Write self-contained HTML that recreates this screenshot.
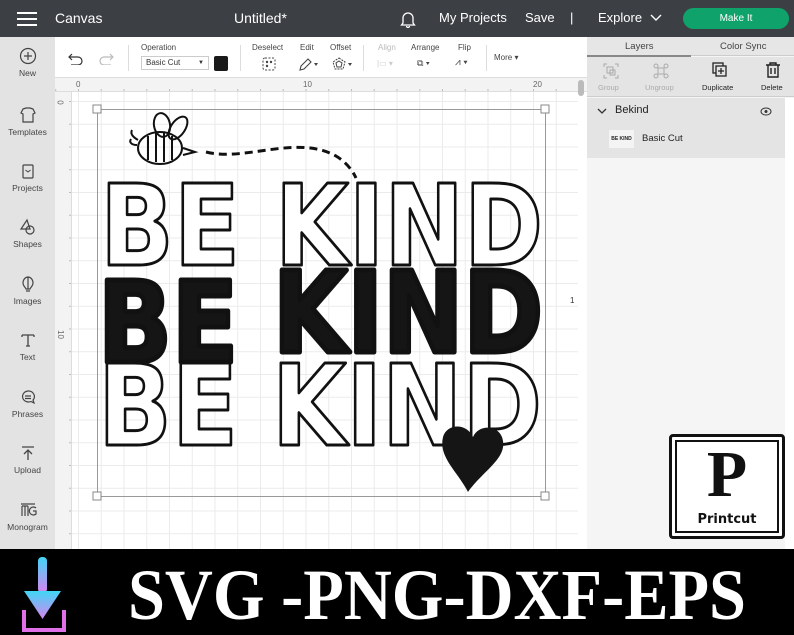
<!DOCTYPE html>
<html><head><meta charset="utf-8"><style>
*{margin:0;padding:0;box-sizing:border-box}
body{width:794px;height:635px;overflow:hidden;position:relative;font-family:"Liberation Sans",sans-serif;background:#fff}
.abs{position:absolute}
.hdr{left:0;top:0;width:794px;height:37px;background:#3c3f44;color:#fff}
.side{left:0;top:37px;width:55px;height:512px;background:#e3e3e3}
.si{position:absolute;left:0;width:55px;text-align:center;font-size:8.5px;color:#444}
.si svg{display:block;margin:0 auto 3px}
.tb{left:55px;top:37px;width:532px;height:41px;background:#fff;border-bottom:1px solid #ddd}
.lbl{position:absolute;font-size:8px;color:#444}
.ruler{background:#f3f3f3}
.grid{left:72px;top:92px;width:506px;height:457px;background-color:#fff;
background-image:linear-gradient(#ebebeb 1px,transparent 1px),linear-gradient(90deg,#ebebeb 1px,transparent 1px);
background-size:22.75px 22.75px;background-position:6px 9px}
.rp{left:587px;top:37px;width:207px;height:512px;background:#f5f5f5}
</style></head><body>
<div class="abs hdr">
  <div class="abs" style="left:17px;top:12px;width:20px;height:2px;background:#fff;box-shadow:0 6px 0 #fff,0 12px 0 #fff"></div>
  <div class="abs" style="left:55px;top:10px;font-size:14px">Canvas</div>
  <div class="abs" style="left:234px;top:10px;font-size:14px">Untitled*</div>
  <svg class="abs" style="left:400px;top:10px" width="16" height="18" viewBox="0 0 16 18"><path d="M3 13V8a5 5 0 0 1 10 0v5l1.5 2h-13z M6.5 16a1.5 1.5 0 0 0 3 0" fill="none" stroke="#fff" stroke-width="1.3"/></svg>
  <div class="abs" style="left:439px;top:10px;font-size:13px">My Projects</div>
  <div class="abs" style="left:525px;top:10px;font-size:13px">Save</div>
  <div class="abs" style="left:570px;top:10px;font-size:13px">|</div>
  <div class="abs" style="left:598px;top:10px;font-size:13px">Explore</div>
  <svg class="abs" style="left:650px;top:14px" width="12" height="8"><path d="M1 1l5 5 5-5" fill="none" stroke="#fff" stroke-width="1.4"/></svg>
  <div class="abs" style="left:683px;top:8px;width:106px;height:21px;background:#0fa36b;border-radius:11px;font-size:10px;text-align:center;line-height:21px">Make It</div>
</div>
<div class="abs side">
  <div class="si" style="top:10px"><svg width="18" height="18"><circle cx="9" cy="9" r="7.5" fill="none" stroke="#444" stroke-width="1.2"/><path d="M9 5v8M5 9h8" stroke="#444" stroke-width="1.2"/></svg>New</div>
  <div class="si" style="top:69px"><svg width="18" height="18"><path d="M4 3l3-1h4l3 1 2 4-2 1v8H4V8L2 7z" fill="none" stroke="#444" stroke-width="1.2"/></svg>Templates</div>
  <div class="si" style="top:125px"><svg width="18" height="18"><rect x="4" y="3" width="10" height="13" rx="1" fill="none" stroke="#444" stroke-width="1.2"/><path d="M6.5 8l2.5 2 2.5-2" fill="none" stroke="#444"/></svg>Projects</div>
  <div class="si" style="top:181px"><svg width="18" height="18"><path d="M8 2l-6 9h9z" fill="none" stroke="#444" stroke-width="1.2"/><circle cx="11" cy="12" r="4" fill="none" stroke="#444" stroke-width="1.2"/></svg>Shapes</div>
  <div class="si" style="top:238px"><svg width="18" height="18"><path d="M9 2a5 6 0 0 0-5 6c0 3 3 5 3 6h4c0-1 3-3 3-6a5 6 0 0 0-5-6zM7 16h4M9 2v12" fill="none" stroke="#444" stroke-width="1.2"/></svg>Images</div>
  <div class="si" style="top:294px"><svg width="18" height="18"><path d="M3 4h12M9 4v11M7 15h4M3 4v2M15 4v2" fill="none" stroke="#444" stroke-width="1.3"/></svg>Text</div>
  <div class="si" style="top:351px"><svg width="18" height="18"><path d="M9 3a6 5.5 0 1 0 3 10.5l3 1.5-1-3A6 5.5 0 0 0 9 3zM6 8h6M6 10.5h6" fill="none" stroke="#444" stroke-width="1.2"/></svg>Phrases</div>
  <div class="si" style="top:407px"><svg width="18" height="18"><path d="M3 3h12M9 16V6M5 10l4-4 4 4" fill="none" stroke="#444" stroke-width="1.3"/></svg>Upload</div>
  <div class="si" style="top:464px"><svg width="18" height="18"><path d="M2 3h14M3 5v10M6 5v10M9 5v10M3 5h6M17 7a4 4 0 1 0 0 6v-3h-3" fill="none" stroke="#444" stroke-width="1.2"/></svg>Monogram</div>
</div>
<div class="abs tb">
  <svg class="abs" style="left:13px;top:16px" width="16" height="12"><path d="M4 1L1 4l3 3M1 4h9a4 4 0 0 1 0 8H3" fill="none" stroke="#333" stroke-width="1.2"/></svg>
  <svg class="abs" style="left:43px;top:16px" width="16" height="12"><path d="M12 1l3 3-3 3M15 4H6a4 4 0 0 0 0 8h7" fill="none" stroke="#bbb" stroke-width="1.2"/></svg>
  <div class="abs" style="left:73px;top:8px;width:1px;height:26px;background:#ddd"></div>
  <div class="lbl" style="left:86px;top:6px">Operation</div>
  <div class="abs" style="left:86px;top:19px;width:68px;height:14px;border:1px solid #ccc;font-size:8px;line-height:12px;padding-left:4px;color:#333">Basic Cut<span style="position:absolute;right:4px;font-size:6px">▼</span></div>
  <div class="abs" style="left:159px;top:19px;width:14px;height:15px;background:#1a1a1a;border-radius:2px"></div>
  <div class="abs" style="left:185px;top:8px;width:1px;height:26px;background:#ddd"></div>
  <div class="lbl" style="left:197px;top:6px">Deselect</div>
  <svg class="abs" style="left:207px;top:20px" width="14" height="14"><rect x="1" y="1" width="12" height="12" rx="2" fill="none" stroke="#444" stroke-dasharray="2 1.5"/><circle cx="5" cy="5" r="1.2" fill="#444"/><circle cx="9" cy="5" r="1.2" fill="#444"/><circle cx="5" cy="9" r="1.2" fill="#444"/></svg>
  <div class="lbl" style="left:245px;top:6px">Edit</div>
  <svg class="abs" style="left:243px;top:20px" width="22" height="14"><path d="M2 13l1-4 7-7 3 3-7 7z" fill="none" stroke="#444" stroke-width="1.1"/><path d="M16 6l2 3 2-3z" fill="#444"/></svg>
  <div class="lbl" style="left:275px;top:6px">Offset</div>
  <svg class="abs" style="left:277px;top:20px" width="22" height="14"><path d="M7 1l6 4-2 7H3L1 5z" fill="none" stroke="#444" stroke-dasharray="2 1"/><path d="M7 4l3 2-1 4H5L4 6z" fill="none" stroke="#444"/><path d="M16 6l2 3 2-3z" fill="#444"/></svg>
  <div class="abs" style="left:308px;top:8px;width:1px;height:26px;background:#ddd"></div>
  <div class="lbl" style="left:323px;top:6px;color:#bbb">Align</div>
  <div class="lbl" style="left:322px;top:22px;color:#ccc">|▭ ▾</div>
  <div class="lbl" style="left:356px;top:6px">Arrange</div>
  <div class="lbl" style="left:362px;top:21px;font-size:9px">⧉ ▾</div>
  <div class="lbl" style="left:403px;top:6px">Flip</div>
  <div class="lbl" style="left:400px;top:20px;font-size:10px">⩘ ▾</div>
  <div class="abs" style="left:431px;top:8px;width:1px;height:26px;background:#ddd"></div>
  <div class="lbl" style="left:439px;top:16px">More ▾</div>
</div>
<div class="abs ruler" style="left:55px;top:78px;width:532px;height:14px;border-bottom:1px solid #ddd;background-image:linear-gradient(90deg,#bbb 1px,transparent 1px);background-size:22.75px 3px;background-repeat:repeat-x;background-position:23px 11px"></div>
<div class="abs ruler" style="left:55px;top:92px;width:17px;height:457px;border-right:1px solid #ddd;background-image:linear-gradient(#bbb 1px,transparent 1px);background-size:3px 22.75px;background-repeat:repeat-y;background-position:14px 9px"></div>
<div class="lbl" style="left:76px;top:80px;color:#666">0</div>
<div class="lbl" style="left:303px;top:80px;color:#666">10</div>
<div class="lbl" style="left:533px;top:80px;color:#666">20</div>
<div class="lbl" style="left:58px;top:98px;color:#666;transform:rotate(90deg)">0</div>
<div class="lbl" style="left:56px;top:330px;color:#666;transform:rotate(90deg)">10</div>
<div class="abs" style="left:578px;top:80px;width:6px;height:16px;background:#bbb;border-radius:3px"></div>
<div class="abs grid"></div>
<div class="lbl" style="left:570px;top:296px;color:#333">1</div>
<svg class="abs" style="left:90px;top:100px" width="470" height="410" viewBox="0 0 470 410">
  <rect x="7.5" y="9.5" width="448" height="387" fill="none" stroke="#999"/>
  <g fill="#fff" stroke="#888"><rect x="3" y="5" width="8" height="8"/><rect x="451" y="5" width="8" height="8"/><rect x="3" y="392" width="8" height="8"/><rect x="451" y="392" width="8" height="8"/></g>
  <g fill="none" stroke="#111" stroke-width="2">
    <ellipse cx="70" cy="48" rx="22" ry="16"/>
    <path d="M58 36v24M66 33v29M74 33v29M82 36v24"/>
    <ellipse cx="72" cy="25" rx="8" ry="12" transform="rotate(-10 72 25)"/>
    <ellipse cx="88" cy="28" rx="7" ry="13" transform="rotate(35 88 28)"/>
    <path d="M48 40c-5-3-8-6-6-10M47 45c-6 0-8-3-6-6"/>
    <path d="M93 48l12 4-12 3"/>
  </g>
  <path d="M116 52c40 10 90-18 130 4c10 6 17 15 20 22" fill="none" stroke="#111" stroke-width="3" stroke-dasharray="8 5"/>
  <g font-family="DejaVu Sans,sans-serif" font-weight="bold" font-size="112" stroke="#111" stroke-width="3" stroke-linejoin="round">
    <text x="10" y="165" fill="#fff" textLength="140" lengthAdjust="spacingAndGlyphs">BE</text>
    <text x="185" y="165" fill="#fff" textLength="268" lengthAdjust="spacingAndGlyphs">KIND</text>
    <text x="8" y="262" fill="#151515" stroke-width="5" textLength="140" lengthAdjust="spacingAndGlyphs">BE</text>
    <text x="183" y="252" fill="#151515" stroke-width="5" textLength="270" lengthAdjust="spacingAndGlyphs">KIND</text>
    <text x="8" y="345" fill="#fff" textLength="140" lengthAdjust="spacingAndGlyphs">BE</text>
    <text x="182" y="345" fill="#fff" textLength="270" lengthAdjust="spacingAndGlyphs">KIND</text>
  </g>
  <path d="M378 392c-10-20-30-35-25-55c4-14 24-14 30 0c6-14 28-12 30 4c3 18-20 30-35 51z" fill="#151515"/>
</svg>
<div class="abs rp">
  <div class="abs" style="left:0;top:0;width:207px;height:19px;background:#e6e6e6;border-bottom:1px solid #ccc"></div>
  <div class="abs" style="left:0;top:18px;width:104px;height:2px;background:#888"></div>
  <div class="abs" style="left:38px;top:4px;font-size:9.5px;color:#444">Layers</div>
  <div class="abs" style="left:133px;top:4px;font-size:9.5px;color:#444">Color Sync</div>
  <div class="abs" style="left:0;top:20px;width:207px;height:40px;background:#e4e4e4;border-bottom:1px solid #ccc"></div>
  <div class="abs" style="left:11px;top:46px;font-size:7.5px;color:#aaa">Group</div>
  <div class="abs" style="left:58px;top:46px;font-size:7.5px;color:#aaa">Ungroup</div>
  <div class="abs" style="left:115px;top:46px;font-size:7.5px;color:#222">Duplicate</div>
  <div class="abs" style="left:174px;top:46px;font-size:7.5px;color:#222">Delete</div>
  <svg class="abs" style="left:16px;top:26px" width="16" height="16"><path d="M1 4V1h3M12 1h3v3M15 12v3h-3M4 15H1v-3" fill="none" stroke="#aaa"/><rect x="4" y="4" width="6" height="6" fill="none" stroke="#aaa"/><rect x="7" y="7" width="5" height="5" fill="none" stroke="#aaa"/></svg>
  <svg class="abs" style="left:66px;top:26px" width="16" height="16"><circle cx="3" cy="3" r="2" fill="none" stroke="#aaa"/><circle cx="13" cy="3" r="2" fill="none" stroke="#aaa"/><circle cx="3" cy="13" r="2" fill="none" stroke="#aaa"/><circle cx="13" cy="13" r="2" fill="none" stroke="#aaa"/><rect x="5" y="5" width="6" height="6" fill="none" stroke="#aaa"/></svg>
  <svg class="abs" style="left:125px;top:25px" width="16" height="16"><rect x="1" y="1" width="10" height="10" fill="none" stroke="#222" stroke-width="1.3"/><rect x="4" y="4" width="10" height="10" fill="#e4e4e4" stroke="#222" stroke-width="1.3"/><path d="M9 6v6M6 9h6" stroke="#222" stroke-width="1.3"/></svg>
  <svg class="abs" style="left:178px;top:25px" width="16" height="16"><path d="M1 3h14M5 3V1h6v2M3 3v12h10V3M6 6v6M10 6v6" fill="none" stroke="#222" stroke-width="1.4"/></svg>
  <div class="abs" style="left:0;top:61px;width:198px;height:60px;background:#e4e4e4"></div>
  <svg class="abs" style="left:10px;top:71px" width="10" height="7"><path d="M1 1l4 4 4-4" fill="none" stroke="#333" stroke-width="1.3"/></svg>
  <div class="abs" style="left:28px;top:67px;font-size:11px;color:#222">Bekind</div>
  <svg class="abs" style="left:173px;top:70px" width="12" height="9"><ellipse cx="6" cy="4.5" rx="5" ry="3.5" fill="none" stroke="#333"/><circle cx="6" cy="4.5" r="1.5" fill="#333"/></svg>
  <div class="abs" style="left:22px;top:93px;width:25px;height:18px;background:#f4f4f4;font-size:5px;font-weight:bold;line-height:18px;text-align:center;color:#222;white-space:nowrap;overflow:hidden">BE KIND</div>
  <div class="abs" style="left:55px;top:96px;font-size:9.5px;color:#222">Basic Cut</div>
  <div class="abs" style="left:198px;top:61px;width:9px;height:451px;background:#fff"></div>
</div>
<div class="abs" style="left:669px;top:434px;width:116px;height:105px;border:3px solid #111;border-radius:4px;background:#fff">
  <div class="abs" style="left:3px;top:3px;right:3px;bottom:3px;border:2px solid #111"></div>
  <div class="abs" style="left:0;width:110px;top:6px;text-align:center;font-family:'Liberation Serif',serif;font-weight:bold;font-size:66px;line-height:64px;color:#111">P</div>
  <div class="abs" style="left:0;width:110px;top:75px;text-align:center;font-family:'DejaVu Sans',sans-serif;font-weight:bold;font-size:13px;color:#111">Printcut</div>
</div>
<div class="abs" style="left:0;top:549px;width:794px;height:86px;background:#000"></div>
<svg class="abs" style="left:20px;top:555px" width="50" height="80" viewBox="0 0 50 80">
  <defs><linearGradient id="g" x1="0" y1="0" x2="0" y2="1"><stop offset="0" stop-color="#3fd6f5"/><stop offset="1" stop-color="#d884f0"/></linearGradient></defs>
  <rect x="18" y="2" width="9" height="36" rx="4" fill="url(#g)"/>
  <path d="M4 36h37L22.5 64z" fill="url(#g)"/>
  <path d="M4 55v20h40V55" fill="none" stroke="#e070e8" stroke-width="4"/>
</svg>
<svg class="abs" style="left:120px;top:555px" width="640" height="76">
  <text x="8" y="64" fill="#fff" font-family="'Liberation Serif',serif" font-weight="bold" font-size="72" textLength="618" lengthAdjust="spacingAndGlyphs">SVG -PNG-DXF-EPS</text>
</svg>
</body></html>
